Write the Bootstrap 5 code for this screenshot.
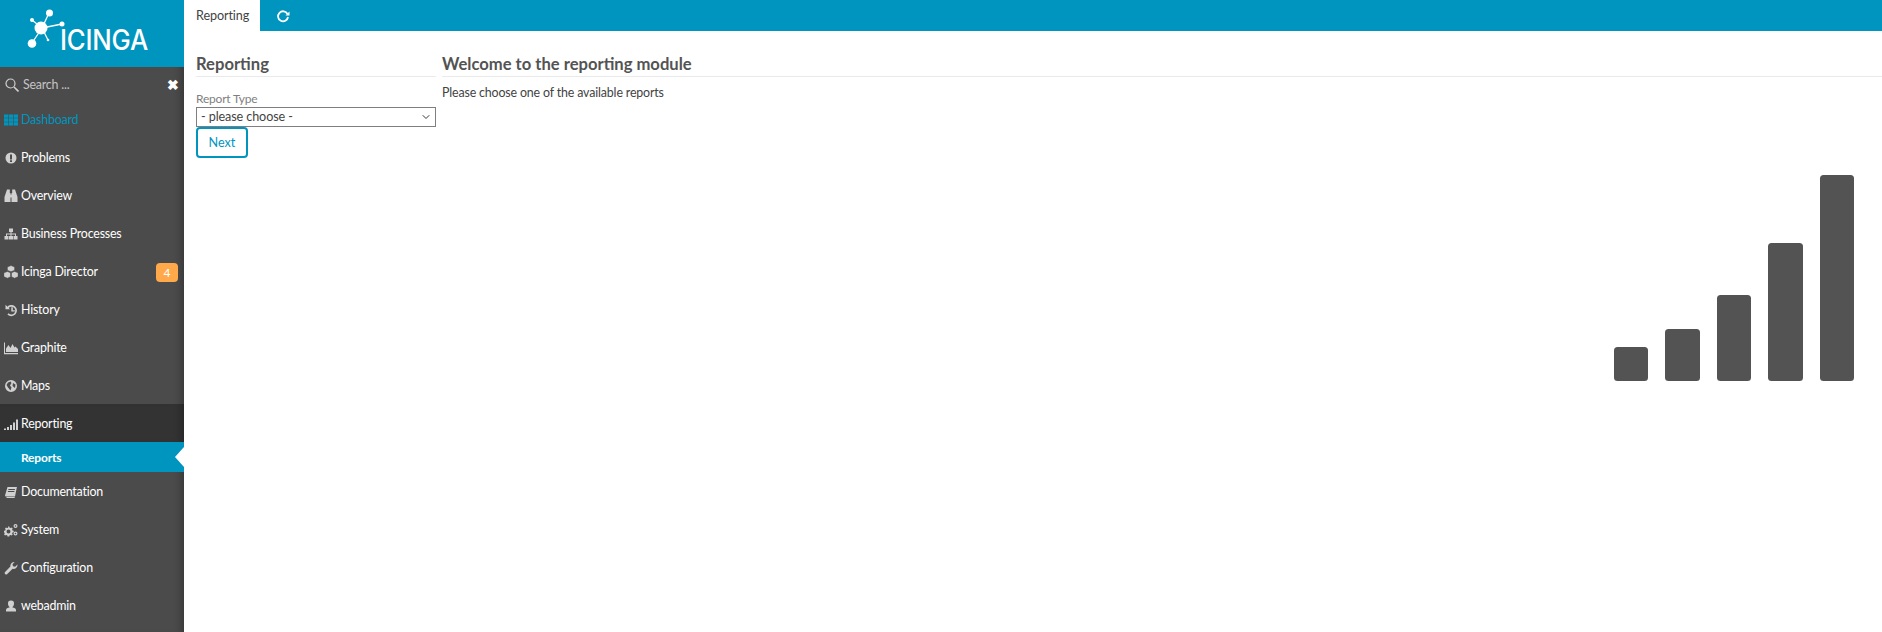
<!DOCTYPE html>
<html lang="en">
<head>
<meta charset="utf-8">
<title>Icinga Reporting</title>
<link href="https://cdn.jsdelivr.net/npm/bootstrap@5.3.0/dist/css/bootstrap.min.css" rel="stylesheet">
<style>
html,body{height:100%;overflow:hidden}
body{font-family:Lato,"Noto Sans",sans-serif;font-size:12.4px;letter-spacing:-.2px;color:#434343;background:#fff}
.app-shell{height:632px}
.side-col{width:184px;flex:0 0 184px;background:#4b4b4b;box-shadow:inset -8px 0 8px -6px rgba(0,0,0,.3)}
.logo-box{height:67px;background:#0095bf}
.logo-box svg{display:block}
.search-row{height:33px;padding:3px 5px 0 5px;color:#c4c4c4}
.search-row .close-x{color:#fff;font-size:14px;font-weight:700;line-height:1}
.menu-item{height:38px;padding:2px 0 0 4px;color:#fff;gap:3px;text-decoration:none;flex:0 0 38px}
.menu-item svg{width:14px;height:14px;flex:0 0 14px;fill:#d0d0d0}
.menu-item.is-current{color:#0095bf}
.menu-item.is-current svg{fill:#0095bf}
.menu-item.is-open{background:#333;box-shadow:inset -8px 0 8px -6px rgba(0,0,0,.3)}
.sub-item{height:30px;flex:0 0 30px;background:#0095bf;color:#fff;padding:1px 0 0 21px;text-decoration:none;font-weight:700;font-size:12px}
.sub-item::after{content:"";position:absolute;right:0;top:5px;border:10px solid transparent;border-left-width:0;border-right:9px solid #fff}
.warn-pill{background:#ffa94a;color:#fff;width:22px;height:19px;border-radius:4px;font-size:12px;font-weight:400;padding:0;line-height:19px;margin-right:6px}
.top-bar{height:31px;background:#0095bf}
.tab-on{width:76px;background:#fff;color:#434343;padding-left:12px;line-height:31px;text-decoration:none;display:block;font-size:12.6px;letter-spacing:-.1px}
.tab-icon{margin-left:16px;display:flex}
.left-pane{width:240px;margin-left:12px;flex:0 0 240px}
.right-pane{margin-left:6px}
.pane-head{font-size:16.600px;font-weight:700;letter-spacing:0;color:#535353;margin:14px 0 0;height:32px;line-height:20px;padding-top:9px;border-bottom:1px solid #eaeaea}
.type-label{font-size:12px;color:#7f7f7f;margin:14px 0 1px;line-height:15px;display:block}
.type-select{display:block;width:240px;height:20px;border:1px solid #7f7f7f;border-radius:0;padding:0 0 0 4px;font-size:12.6px;letter-spacing:-.1px;line-height:18px;color:#434343;background-size:10px 8px;background-position:right 4px center}
.next-btn{display:block;width:52px;height:31px;padding:2px 0 0;border:2px solid #0095bf;border-radius:4px;color:#0095bf;background:#fff;font-size:12.6px}
.intro-text{margin:7px 0 0;line-height:17px;letter-spacing:-.15px}
.bars-deco{position:absolute;right:28px;top:175px;width:240px;height:206px}
.bars-host{position:relative}
</style>
</head>
<body>
<div class="d-flex app-shell">
  <aside class="side-col d-flex flex-column">
    <div class="logo-box">
      <svg width="184" height="67" viewBox="0 0 184 67" role="img" aria-label="Icinga logo">
        <g stroke="#fff" stroke-width="1.3" fill="#fff">
          <line x1="42" y1="28" x2="49" y2="13"/><line x1="42" y1="28" x2="62" y2="24"/><line x1="42" y1="28" x2="32" y2="20"/><line x1="42" y1="28" x2="32" y2="43"/><line x1="42" y1="28" x2="48" y2="40"/>
          <circle cx="41" cy="28" r="6.500" stroke="none"/><circle cx="49.500" cy="13" r="3.500" stroke="none"/><circle cx="62" cy="24" r="2.500" stroke="none"/><circle cx="32" cy="20" r="2" stroke="none"/><circle cx="32" cy="43.500" r="4.300" stroke="none"/><circle cx="48" cy="40" r="1.300" stroke="none"/>
        </g>
        <text x="60" y="50" fill="#fff" font-family="Inter, Lato, sans-serif" font-size="28" font-weight="500" textLength="88" lengthAdjust="spacingAndGlyphs">ICINGA</text>
      </svg>
    </div>
    <div class="search-row d-flex align-items-center">
      <svg width="14" height="14" viewBox="0 0 14 14" fill="none" stroke="#d0d0d0" stroke-width="1.200"><circle cx="5.500" cy="5.500" r="4.500"/><line x1="9" y1="9" x2="13.500" y2="13.500" stroke-width="1.600"/></svg>
      <span class="ms-1 flex-grow-1">Search ...</span>
      <span class="close-x">✖</span>
    </div>
    <nav class="nav flex-column flex-nowrap">
      <a class="menu-item is-current d-flex align-items-center" href="#"><svg viewBox="0 0 14 14"><path d="M0 1.500h4.300v3.200H0zM4.900 1.500h4.200v3.200H4.900zM9.700 1.500H14v3.200H9.700zM0 5.300h4.300v3.400H0zM4.900 5.300h4.200v3.400H4.900zM9.700 5.300H14v3.400H9.700zM0 9.300h4.300v3.200H0zM4.900 9.300h4.200v3.200H4.900zM9.700 9.300H14v3.200H9.700z"/></svg>Dashboard</a>
      <a class="menu-item d-flex align-items-center" href="#"><svg viewBox="0 0 14 14"><path fill-rule="evenodd" d="M7 1.500a5.500 5.500 0 1 0 0 11 5.500 5.500 0 0 0 0-11zM6 3.500h2v5H6zM6 9.300h2v1.700H6z"/></svg>Problems</a>
      <a class="menu-item d-flex align-items-center" href="#"><svg viewBox="0 0 14 14"><path d="M3 .5h2.800V4h.7v9H.5V8zM8.200 .5H11l2.500 7.500v5h-6V4h.7zM6.500 5.500h1v3h-1z"/></svg>Overview</a>
      <a class="menu-item d-flex align-items-center" href="#"><svg viewBox="0 0 14 14"><path d="M5 1.500h4v3.500H7.500v1.500H12V9h1.500v3.500h-4V9H11V7.500H7.500V9H9v3.500H5V9h1.500V7.500H3V9h1.500v3.500h-4V9H2V6.500h4.500V5H5z"/></svg>Business Processes</a>
      <a class="menu-item d-flex align-items-center position-relative" href="#"><svg viewBox="0 0 14 14"><path d="M7 .5l3.600 1.500v3.300L7 6.800 3.400 5.300V2zM3.500 6.500l3 1.300v3.900l-3 1.500L-.2 11.700V7.800zM10.500 6.500l3.700 1.300v3.900l-3.700 1.500-3-1.500V7.800z" stroke="#4b4b4b" stroke-width=".5"/></svg><span class="flex-grow-1">Icinga Director</span><span class="badge warn-pill">4</span></a>
      <a class="menu-item d-flex align-items-center" href="#"><svg viewBox="0 0 14 14"><path d="M3.500 5A4.700 4.700 0 1 1 4 10.800" fill="none" stroke="#d0d0d0" stroke-width="1.700"/><path d="M1.500 1.700v4.500H6zM7.300 4.200h1.500v3h2v1.400H7.300z"/></svg>History</a>
      <a class="menu-item d-flex align-items-center" href="#"><svg viewBox="0 0 14 14"><path d="M0 1.500h1V12h13v1.200H0zM2 11V7.500L4.500 4l2 3L8.500 3l2 3.500 1-1L14 8v3z"/></svg>Graphite</a>
      <a class="menu-item d-flex align-items-center" href="#"><svg viewBox="0 0 14 14"><path fill-rule="evenodd" d="M7 1a6 6 0 1 0 0 12A6 6 0 0 0 7 1zM4 3.500l2.500-1 1 1.500L6 6.500l1.500 2-1 3L4 8.500 2.500 6zM9 4l2.500 1.500-.5 3.500-2.500-2z"/></svg>Maps</a>
      <a class="menu-item is-open d-flex align-items-center" href="#"><svg viewBox="0 0 14 14"><path d="M0 11.500h2V13H0zM3 10h2v3H3zM6 8h2v5H6zM9 5.500h2V13H9zM12 2.500h2V13h-2z"/></svg>Reporting</a>
      <a class="sub-item position-relative d-flex align-items-center" href="#">Reports</a>
      <a class="menu-item d-flex align-items-center" href="#"><svg viewBox="0 0 14 14"><path d="M3.500 2H13l-.3 1-1.700 8.500H1.500L1 10.500zM4.500 4l-.2 1h6.500l.2-1zM4 6l-.2 1h6.500l.2-1zM2.500 12h8.300l-.2 1H2.500z"/></svg>Documentation</a>
      <a class="menu-item d-flex align-items-center" href="#"><svg viewBox="0 0 14 14"><path fill-rule="evenodd" d="M4 3.500h1.300l.3 1.200 1 .4 1.100-.6 1 1-.6 1 .4 1 1.200.3v1.400l-1.200.3-.4 1 .6 1-1 1-1.100-.6-1 .4-.3 1.200H3.500l-.3-1.200-1-.4-1.100.6-1-1 .6-1-.4-1L0 9.200V7.800l1.200-.3.4-1-.6-1 1-1 1.100.6 1-.4zM4.500 6.500a2 2 0 1 0 0 4 2 2 0 0 0 0-4zM11.500 1a2 2 0 1 0 0 4 2 2 0 0 0 0-4zm0 1.200a.8.8 0 1 1 0 1.600.8.8 0 0 1 0-1.600zM11.500 8.500a2 2 0 1 0 0 4 2 2 0 0 0 0-4zm0 1.200a.8.8 0 1 1 0 1.600.8.8 0 0 1 0-1.600z"/></svg>System</a>
      <a class="menu-item d-flex align-items-center" href="#"><svg viewBox="0 0 14 14"><path d="M13.500 3.500A4 4 0 0 1 8.600 7.800L3.300 13a1.400 1.400 0 0 1-2.200-2.100l5.300-5.300A4 4 0 0 1 10.600 1L8.500 3.200l.5 2 2.100.5z"/></svg>Configuration</a>
      <a class="menu-item d-flex align-items-center" href="#"><svg viewBox="0 0 14 14"><path d="M7 1.500a3 3 0 0 1 3 3.200c0 1.500-.8 2.800-1.500 3.200v.6c1.800.4 3.500 1 3.500 2.500v1.500H2V11c0-1.500 1.700-2.100 3.500-2.500v-.6C4.800 7.500 4 6.200 4 4.700a3 3 0 0 1 3-3.200z"/></svg>webadmin</a>
    </nav>
  </aside>
  <main class="flex-grow-1 d-flex flex-column bars-host">
    <div class="top-bar d-flex align-items-center">
      <a class="tab-on" href="#">Reporting</a>
      <span class="tab-icon"><svg width="14" height="14" viewBox="0 0 14 14" fill="none" stroke="#fff" stroke-width="1.800"><path d="M11.500 5A5 5 0 1 0 12 8"/><path d="M13.500 2.500v4h-4z" fill="#fff" stroke="none"/></svg></span>
    </div>
    <div class="d-flex flex-grow-1">
      <section class="left-pane">
        <h2 class="pane-head">Reporting</h2>
        <form>
          <label class="type-label" for="rt">Report Type</label>
          <select id="rt" class="form-select type-select"><option>- please choose -</option></select>
          <button type="button" class="btn next-btn">Next</button>
        </form>
      </section>
      <section class="right-pane flex-grow-1">
        <h2 class="pane-head">Welcome to the reporting module</h2>
        <p class="intro-text">Please choose one of the available reports</p>
      </section>
    </div>
    <svg class="bars-deco" viewBox="0 0 240 206" fill="#535353" aria-hidden="true">
      <rect x="0" y="172" width="34" height="34" rx="3.500"/><rect x="51" y="154" width="35" height="52" rx="3.500"/><rect x="103" y="120" width="34" height="86" rx="3.500"/><rect x="154" y="68" width="35" height="138" rx="3.500"/><rect x="206" y="0" width="34" height="206" rx="3.500"/>
    </svg>
  </main>
</div>
<script src="https://cdn.jsdelivr.net/npm/bootstrap@5.3.0/dist/js/bootstrap.bundle.min.js"></script>
</body>
</html>
